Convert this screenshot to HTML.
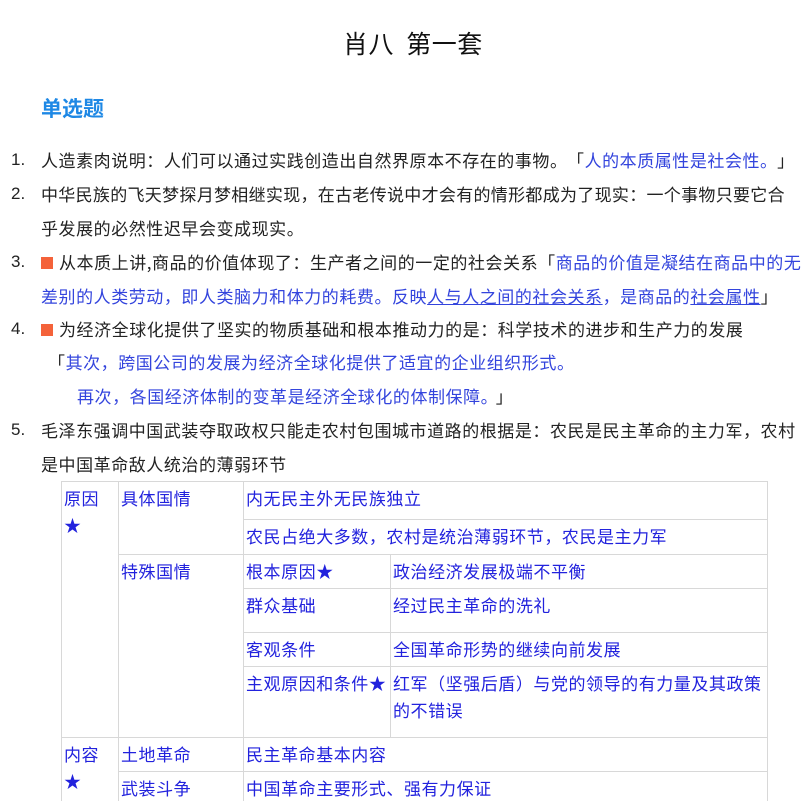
<!DOCTYPE html>
<html><head><meta charset="utf-8">
<style>
html,body{margin:0;padding:0;background:#fff;width:803px;height:801px;overflow:hidden;position:relative;}
body{font-family:"WenQuanYi Zen Hei","Noto Sans CJK SC",sans-serif;color:#222;font-size:17px;letter-spacing:0.55px;}
.l{position:absolute;white-space:nowrap;line-height:20px;}
.n{position:absolute;left:11px;line-height:20px;font-family:"Liberation Sans",sans-serif;letter-spacing:0;}
.b{color:#3344dd;}
.u{text-decoration:underline;}
.sq{display:inline-block;width:12px;height:12px;background:#f4623a;margin-right:6px;vertical-align:0px;}
table{position:absolute;left:61px;top:481px;border-collapse:collapse;color:#2222dd;font-size:17px;table-layout:fixed;width:706px;}
td{border:1px solid #d8d8d8;vertical-align:top;padding:6px 2px 0 2px;line-height:20px;white-space:nowrap;overflow:hidden;}
</style></head><body>
<div class="l" style="left:343px;top:29px;font-size:25px;line-height:28px;color:#111;letter-spacing:0.5px">肖八&nbsp;&nbsp;第一套</div>
<div class="l" style="left:41px;top:96px;font-size:21px;line-height:24px;color:#1e88e5;font-weight:bold;letter-spacing:0">单选题</div>

<div class="n" style="top:150px">1.</div>
<div class="l" style="left:41px;top:150px">人造素肉说明：人们可以通过实践创造出自然界原本不存在的事物。<span style="margin-left:8px">「</span><span class="b">人的本质属性是社会性。</span><span style="margin-left:8px">」</span></div>
<div class="n" style="top:184px">2.</div>
<div class="l" style="left:41px;top:184px;letter-spacing:0.3px">中华民族的飞天梦探月梦相继实现，在古老传说中才会有的情形都成为了现实：一个事物只要它合</div>
<div class="l" style="left:41px;top:218px">乎发展的必然性迟早会变成现实。</div>
<div class="n" style="top:252px">3.</div>
<div class="l" style="left:41px;top:252px"><span class="sq"></span>从本质上讲,商品的价值体现了：生产者之间的一定的社会关系「<span class="b">商品的价值是凝结在商品中的无</span></div>
<div class="l b" style="left:41px;top:286px">差别的人类劳动，即人类脑力和体力的耗费。反映<span class="u">人与人之间的社会关系</span>，是商品的<span class="u">社会属性</span><span style="color:#222">」</span></div>
<div class="n" style="top:319px">4.</div>
<div class="l" style="left:41px;top:319px"><span class="sq"></span>为经济全球化提供了坚实的物质基础和根本推动力的是：科学技术的进步和生产力的发展</div>
<div class="l" style="left:48px;top:352px">「<span class="b">其次，跨国公司的发展为经济全球化提供了适宜的企业组织形式。</span></div>
<div class="l b" style="left:77px;top:386px">再次，各国经济体制的变革是经济全球化的体制保障。<span style="color:#222;margin-left:6px">」</span></div>
<div class="n" style="top:420px">5.</div>
<div class="l" style="left:41px;top:420px">毛泽东强调中国武装夺取政权只能走农村包围城市道路的根据是：农民是民主革命的主力军，农村</div>
<div class="l" style="left:41px;top:454px">是中国革命敌人统治的薄弱环节</div>

<table>
<colgroup><col style="width:57px"><col style="width:125px"><col style="width:147px"><col style="width:377px"></colgroup>
<tr style="height:38px"><td rowspan="6">原因<br><span style="line-height:34px">★</span></td><td rowspan="2">具体国情</td><td colspan="2">内无民主外无民族独立</td></tr>
<tr style="height:35px"><td colspan="2">农民占绝大多数，农村是统治薄弱环节，农民是主力军</td></tr>
<tr style="height:34px"><td rowspan="4">特殊国情</td><td>根本原因★</td><td>政治经济发展极端不平衡</td></tr>
<tr style="height:44px"><td>群众基础</td><td>经过民主革命的洗礼</td></tr>
<tr style="height:34px"><td>客观条件</td><td>全国革命形势的继续向前发展</td></tr>
<tr style="height:71px"><td>主观原因和条件★</td><td>红军（坚强后盾）与党的领导的有力量及其政策<br><span style="line-height:34px">的不错误</span></td></tr>
<tr style="height:34px"><td rowspan="2">内容<br><span style="line-height:34px">★</span></td><td>土地革命</td><td colspan="2">民主革命基本内容</td></tr>
<tr style="height:34px"><td>武装斗争</td><td colspan="2">中国革命主要形式、强有力保证</td></tr>
</table>
</body></html>
